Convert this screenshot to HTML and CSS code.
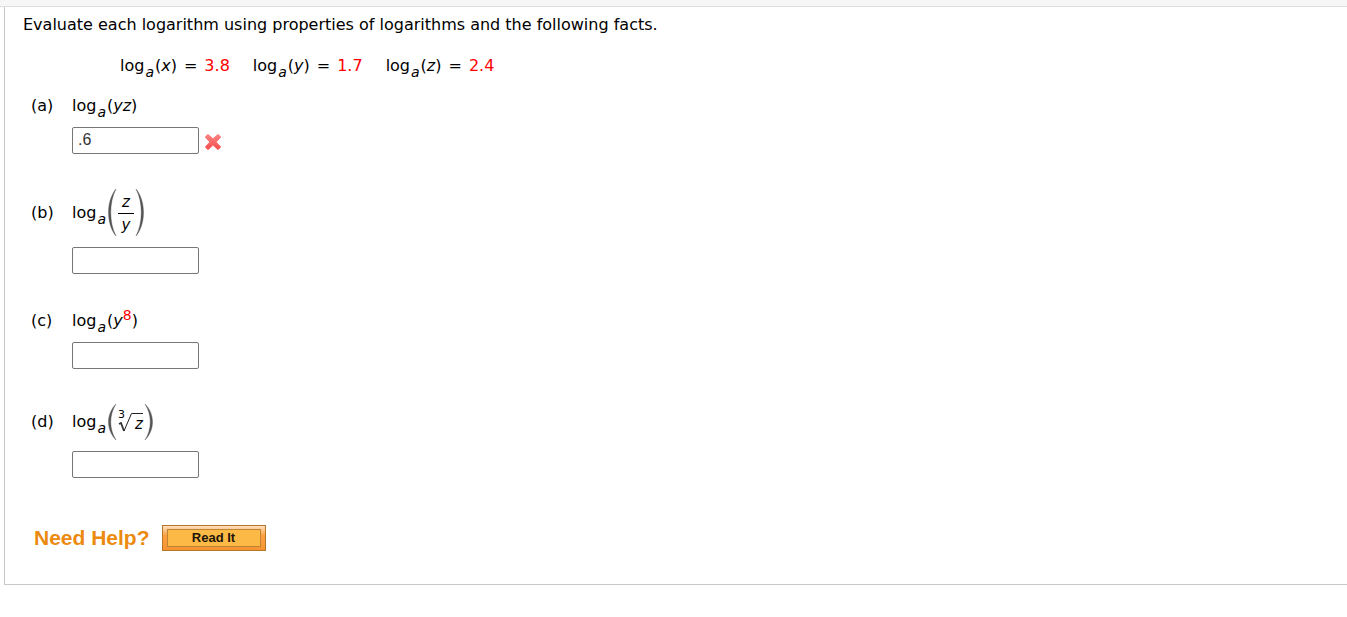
FILE: index.html
```html
<!DOCTYPE html>
<html lang="en">
<head>
<meta charset="utf-8">
<title>Logarithm properties</title>
<link rel="stylesheet" href="styles.css">
</head>
<body>
<div class="topbar"></div>
<main class="panel">
  <p class="prompt">Evaluate each logarithm using properties of logarithms and the following facts.</p>
  <div class="facts">
    <span class="fact">log<sub>a</sub>(<i>x</i>)<span class="equals">=</span><span class="value">3.8</span></span>
    <span class="fact">log<sub>a</sub>(<i>y</i>)<span class="equals">=</span><span class="value">1.7</span></span>
    <span class="fact">log<sub>a</sub>(<i>z</i>)<span class="equals">=</span><span class="value">2.4</span></span>
  </div>

  <section class="part">
    <label class="math" for="ans-a"><span class="letter">(a)</span><span>log<sub>a</sub>(<i>yz</i>)</span></label>
    <div class="answer">
      <input id="ans-a" class="field" type="text" value=".6">
      <svg class="wrong" viewBox="0 0 18 18" role="img" aria-label="Incorrect">
        <defs><linearGradient id="red" x1="0" y1="0" x2="0" y2="1"><stop offset="0" stop-color="#ff8585"/><stop offset="1" stop-color="#f34b4b"/></linearGradient></defs>
        <path fill="url(#red)" stroke="#fb7777" stroke-width="1" stroke-linejoin="round" d="M4 1.5 L9 5.8 L14 1.5 L16.8 4 L12.2 9 L16.8 14 L14 16.8 L9 12.3 L4 16.8 L1.2 14 L5.8 9 L1.2 4 Z"/>
      </svg>
    </div>
  </section>

  <section class="part">
    <label class="math tall" for="ans-b"><span class="letter">(b)</span><span>log<sub>a</sub></span>
      <svg class="paren" viewBox="0 0 10 50"><path d="M9 1 C-1 13 -1 36 9 48 C2 35 2 14 9 1Z"/></svg>
      <span class="fraction"><i class="top">z</i><i>y</i></span>
      <svg class="paren" viewBox="0 0 10 50"><path d="M1 1 C11 13 11 36 1 48 C8 35 8 14 1 1Z"/></svg>
    </label>
    <div class="answer"><input id="ans-b" class="field" type="text"></div>
  </section>

  <section class="part">
    <label class="math short" for="ans-c"><span class="letter">(c)</span><span>log<sub>a</sub>(<i>y</i><sup>8</sup>)</span></label>
    <div class="answer"><input id="ans-c" class="field" type="text"></div>
  </section>

  <section class="part">
    <label class="math medium" for="ans-d"><span class="letter">(d)</span><span>log<sub>a</sub></span>
      <svg class="paren" viewBox="0 0 10 38"><path d="M9 1 C-1 11 -1 27 9 37 C2 26 2 12 9 1Z"/></svg>
      <span class="root"><span class="index">3</span><svg class="radical" viewBox="0 0 26 24"><path d="M2 14 L4 13 L7 21" fill="none" stroke="#333" stroke-width="1.8"/><path d="M7 21 L14.5 3.5 H27" fill="none" stroke="#222"/></svg><i>z</i></span>
      <svg class="paren" viewBox="0 0 10 38"><path d="M1 1 C11 11 11 27 1 37 C8 26 8 12 1 1Z"/></svg>
    </label>
    <div class="answer"><input id="ans-d" class="field" type="text"></div>
  </section>

  <div class="help">
    <span class="help-title">Need Help?</span>
    <button class="read" type="button"><span class="read-face">Read It</span></button>
  </div>
</main>
</body>
</html>
```
FILE: styles.css
```css
* { box-sizing: border-box; }
body {
  margin: 0;
  background: #fff;
  color: #000;
  font: 16px/22px Verdana, "DejaVu Sans", sans-serif;
}
.topbar {
  height: 7px;
  background: #f6f6f6;
  border-bottom: 1px solid #ddd;
}
.panel {
  margin-left: 4px;
  padding: 7px 18px 33px;
  border-left: 1px solid #c8c8c8;
  border-bottom: 1px solid #c8c8c8;
}
.prompt { margin: 0 0 19px; }
.facts {
  display: flex;
  gap: 23px;
  margin: 0 0 17px 97px;
}
.equals { margin: 0 7px; }
.value, sup { color: #f00; }
sub, sup {
  position: relative;
  font-size: 14px;
  line-height: 0;
  vertical-align: baseline;
}
sub { top: 6px; margin: 0 1px; font-style: italic; }
sup { top: -6px; }
.part { padding-left: 8px; margin-bottom: 34px; }
.math {
  display: flex;
  align-items: center;
  height: 24px;
}
.tall { height: 50px; }
.medium { height: 38px; }
.short { height: 25px; }
.letter { width: 41px; }
.answer {
  display: flex;
  align-items: center;
  gap: 5px;
  margin: 9px 0 0 41px;
}
.medium + .answer { margin-top: 10px; }
.field {
  width: 127px;
  height: 27px;
  padding: 0 5px 2px;
  border: 1px solid #767676;
  border-radius: 2px;
  background: #fff;
  color: #333;
  font: 16px "Liberation Sans", Arial, sans-serif;
}
.wrong { width: 18px; height: 18px; margin-top: 3px; }
.paren {
  width: 10px;
  height: 100%;
  fill: #555;
  stroke: #555;
  stroke-width: 0.4;
}
.fraction {
  display: grid;
  width: 16px;
  margin: 0 1px;
  text-align: center;
  font-size: 15px;
}
.top { border-bottom: 1px solid #000; }
.root {
  position: relative;
  width: 27px;
  height: 24px;
  padding-left: 18px;
  font-size: 15px;
  line-height: 28px;
}
.radical { position: absolute; inset: 0; width: 26px; height: 24px; }
.index {
  position: absolute;
  left: 1px;
  top: -1px;
  font-size: 11px;
  line-height: 12px;
}
.help {
  display: flex;
  align-items: center;
  gap: 12px;
  margin: 47px 0 0 11px;
}
.help-title {
  color: #ec8a10;
  font: bold 21px/26px "Liberation Sans", Arial, sans-serif;
}
.read {
  width: 104px;
  height: 26px;
  padding: 3px 4px;
  border: 1px solid #b5762a;
  background: linear-gradient(#fde0bd, #fba040 40%, #f79432);
}
.read-face {
  display: block;
  border: 1px solid #bd8436;
  background: #fdb945;
  color: #1c1408;
  font: bold 13px/16px "Liberation Sans", Arial, sans-serif;
}
```
